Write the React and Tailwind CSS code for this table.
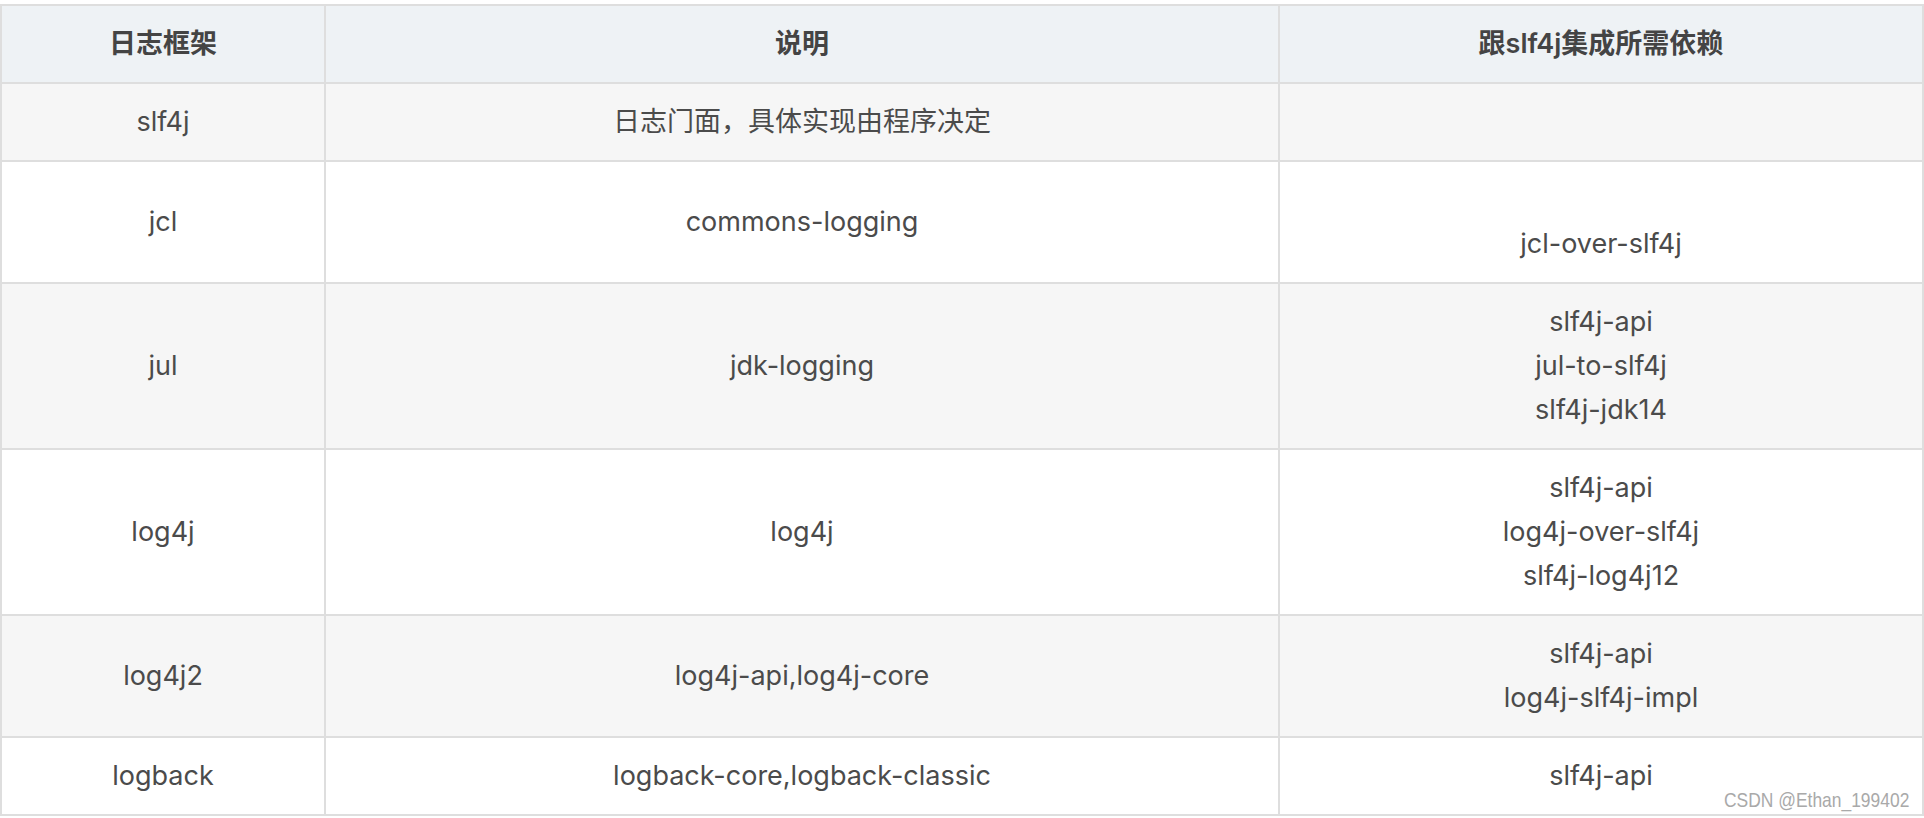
import React from "react";

const rows = [
  { name: "slf4j", desc: "日志门面，具体实现由程序决定", deps: [] },
  { name: "jcl", desc: "commons-logging", deps: ["", "jcl-over-slf4j"] },
  { name: "jul", desc: "jdk-logging", deps: ["slf4j-api", "jul-to-slf4j", "slf4j-jdk14"] },
  { name: "log4j", desc: "log4j", deps: ["slf4j-api", "log4j-over-slf4j", "slf4j-log4j12"] },
  { name: "log4j2", desc: "log4j-api,log4j-core", deps: ["slf4j-api", "log4j-slf4j-impl"] },
  { name: "logback", desc: "logback-core,logback-classic", deps: ["slf4j-api"] },
];

const cell = "flex flex-col items-center justify-center text-center border-r-2 border-b-2 border-[#dedede] py-4 leading-[44px]";

const App = () => {
  return (
    <div
      className="relative min-h-screen bg-white pt-[4px] text-[27px] text-[#4b4b4b]"
      style={{ fontFamily: 'Inter, "Noto Sans CJK SC", sans-serif' }}
    >
      <div className="grid grid-cols-[324px_954px_644px] border-t-2 border-l-2 border-[#dedede]">
        {/* header */}
        <div className={`${cell} bg-[#eef2f5] font-semibold text-[#444]`}>日志框架</div>
        <div className={`${cell} bg-[#eef2f5] font-semibold text-[#444]`}>说明</div>
        <div className={`${cell} bg-[#eef2f5] font-semibold text-[#444]`}>跟slf4j集成所需依赖</div>

        {rows.map((r, i) => {
          const bg = i % 2 === 0 ? "bg-[#f6f6f6]" : "bg-white";
          return (
            <React.Fragment key={r.name}>
              <div className={`${cell} ${bg}`}>{r.name}</div>
              <div className={`${cell} ${bg}`}>{r.desc}</div>
              <div className={`${cell} ${bg}`}>
                {r.deps.length === 0 && <div className="h-[44px]" />}
                {r.deps.map((d, j) =>
                  d ? <div key={j}>{d}</div> : <div key={j} className="h-[44px]" />
                )}
              </div>
            </React.Fragment>
          );
        })}
      </div>

      {/* watermark */}
      <div
        className="absolute left-[1724px] top-[788px] origin-left scale-x-[0.83] whitespace-nowrap text-[21px] leading-[24px] text-[#a9a9a9]"
        style={{ fontFamily: '"Liberation Sans", sans-serif' }}
      >
        CSDN @Ethan_199402
      </div>
    </div>
  );
};

export default App;
